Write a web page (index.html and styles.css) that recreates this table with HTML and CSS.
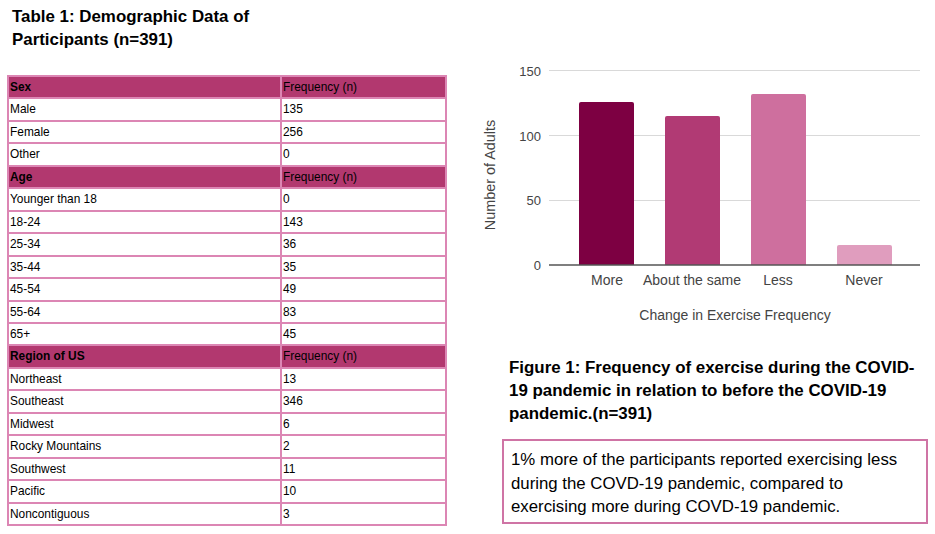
FILE: index.html
```html
<!DOCTYPE html>
<html lang="en">
<head>
<meta charset="utf-8">
<title>Demographic Data and Exercise Frequency</title>
<link rel="stylesheet" href="styles.css">
</head>
<body>
<div class="page">
  <section class="left">
    <h1 class="title">Table 1: Demographic Data of<br>Participants (n=391)</h1>
    <table class="demo">
      <colgroup><col class="c1"><col class="c2"></colgroup>
      <tbody>
        <tr class="head"><td><b>Sex</b></td><td>Frequency (n)</td></tr>
        <tr><td>Male</td><td>135</td></tr>
        <tr><td>Female</td><td>256</td></tr>
        <tr><td>Other</td><td>0</td></tr>
        <tr class="head"><td><b>Age</b></td><td>Frequency (n)</td></tr>
        <tr><td>Younger than 18</td><td>0</td></tr>
        <tr><td>18-24</td><td>143</td></tr>
        <tr><td>25-34</td><td>36</td></tr>
        <tr><td>35-44</td><td>35</td></tr>
        <tr><td>45-54</td><td>49</td></tr>
        <tr><td>55-64</td><td>83</td></tr>
        <tr><td>65+</td><td>45</td></tr>
        <tr class="head"><td><b>Region of US</b></td><td>Frequency (n)</td></tr>
        <tr><td>Northeast</td><td>13</td></tr>
        <tr><td>Southeast</td><td>346</td></tr>
        <tr><td>Midwest</td><td>6</td></tr>
        <tr><td>Rocky Mountains</td><td>2</td></tr>
        <tr><td>Southwest</td><td>11</td></tr>
        <tr><td>Pacific</td><td>10</td></tr>
        <tr><td>Noncontiguous</td><td>3</td></tr>
      </tbody>
    </table>
  </section>
  <section class="right">
    <svg class="chart" width="473" height="335" viewBox="0 0 473 335">
      <g class="grid">
        <line x1="87" y1="70.5" x2="458" y2="70.5"/>
        <line x1="87" y1="135.5" x2="458" y2="135.5"/>
        <line x1="87" y1="200.5" x2="458" y2="200.5"/>
      </g>
      <path d="M117 265 V104 Q117 102 119 102 H170 Q172 102 172 104 V265 Z" fill="#7d0042"/>
      <path d="M203 265 V118 Q203 116 205 116 H256 Q258 116 258 118 V265 Z" fill="#b13a74"/>
      <path d="M289 265 V96 Q289 94 291 94 H342 Q344 94 344 96 V265 Z" fill="#ce6f9e"/>
      <path d="M375 265 V247 Q375 245 377 245 H428 Q430 245 430 247 V265 Z" fill="#e09dbe"/>
      <line class="zero" x1="87" y1="265" x2="458" y2="265"/>
      <g class="tick">
        <text x="79" y="75.5">150</text>
        <text x="79" y="140.5">100</text>
        <text x="79" y="205">50</text>
        <text x="79" y="270">0</text>
      </g>
      <g class="cat">
        <text x="145" y="284.5">More</text>
        <text x="230" y="284.5">About the same</text>
        <text x="316" y="284.5">Less</text>
        <text x="402" y="284.5">Never</text>
      </g>
      <text class="axis" x="273" y="319.5">Change in Exercise Frequency</text>
      <text class="axis ytitle" transform="translate(33 175) rotate(-90)" x="0" y="0">Number of Adults</text>
    </svg>
    <p class="caption">Figure 1: Frequency of exercise during the COVID-19 pandemic in relation to before the COVID-19 pandemic.(n=391)</p>
    <div class="note">1% more of the participants reported exercising less during the COVD-19 pandemic, compared to exercising more during COVD-19 pandemic.</div>
  </section>
</div>
</body>
</html>
```

FILE: styles.css
```css
html, body {
  margin: 0;
  padding: 0;
  background: #ffffff;
}
body {
  font-family: "Liberation Sans", Arial, sans-serif;
  color: #000;
}
.page {
  display: flex;
  width: 935px;
  height: 534px;
  overflow: hidden;
}
.left {
  width: 438px;
  padding-left: 7px;
  padding-top: 5px;
  flex: none;
}
.title {
  margin: 0 0 24px 5px;
  font-size: 16.9px;
  line-height: 23px;
  font-weight: bold;
}
.demo {
  width: 438px;
  border-collapse: collapse;
  table-layout: fixed;
  font-size: 11.9px;
  border: 2px solid #d57aab;
}
.demo .c1 { width: 273px; }
.demo .c2 { width: 165px; }
.demo td {
  border: 2px solid #dc86b4;
  padding: 0 2px 0 1px;
  height: 20.45px;
  line-height: 20.45px;
  white-space: nowrap;
  overflow: hidden;
}
.demo tr.head td {
  background: #b2386f;
}
.right {
  margin-left: 17px;
  width: 473px;
  flex: none;
}
.chart {
  display: block;
}
.chart .grid line {
  stroke: #d9d9d9;
  stroke-width: 1;
}
.chart .zero {
  stroke: #555;
  stroke-width: 1.3;
}
.chart text {
  font-family: "Liberation Sans", Arial, sans-serif;
  font-size: 14px;
  fill: #444;
}
.chart .tick text {
  font-size: 13px;
  text-anchor: end;
}
.chart .cat text,
.chart .axis {
  text-anchor: middle;
}
.chart .ytitle {
  font-size: 14.4px;
}
.caption {
  margin: 21px 0 0 47px;
  width: 412px;
  font-size: 16.9px;
  line-height: 23px;
  font-weight: bold;
}
.note {
  margin: 14px 0 0 40px;
  width: 409px;
  border: 2px solid #cf74a5;
  padding: 7px 6px 3px 7px;
  font-size: 16.8px;
  line-height: 23.5px;
}
```
